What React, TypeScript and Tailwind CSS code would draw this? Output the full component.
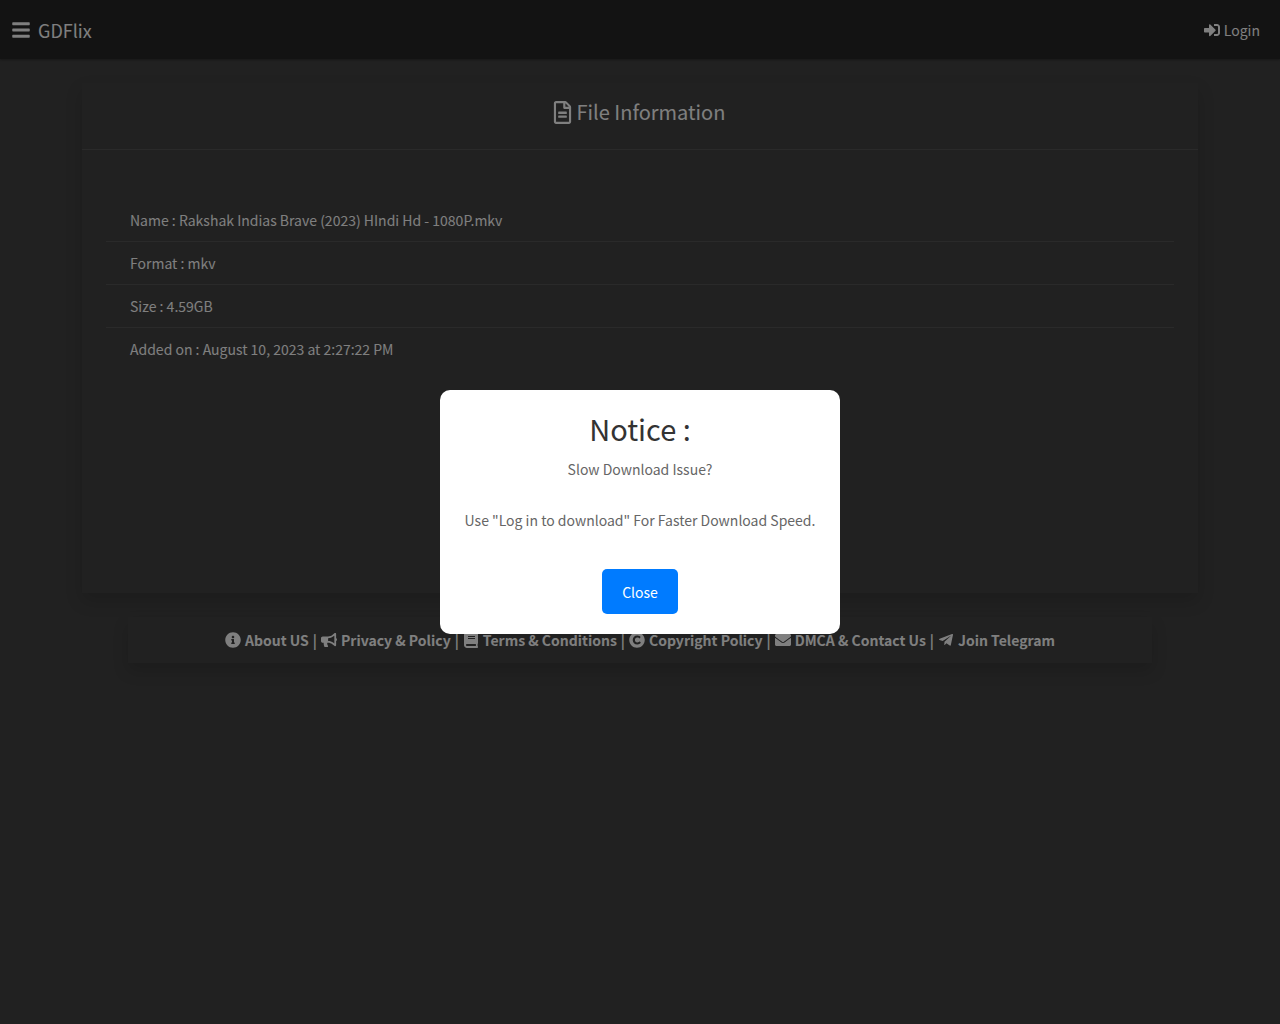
import { Fragment, useState } from "react";
import {
  FaBars,
  FaBook,
  FaBullhorn,
  FaCopyright,
  FaEnvelope,
  FaInfoCircle,
  FaRegFileAlt,
  FaSignInAlt,
  FaTelegramPlane,
} from "react-icons/fa";

const details = [
  "Name : Rakshak Indias Brave (2023) HIndi Hd - 1080P.mkv",
  "Format : mkv",
  "Size : 4.59GB",
  "Added on : August 10, 2023 at 2:27:22 PM",
];

const links = [
  { label: "About US", icon: FaInfoCircle },
  { label: "Privacy & Policy", icon: FaBullhorn },
  { label: "Terms & Conditions", icon: FaBook },
  { label: "Copyright Policy", icon: FaCopyright },
  { label: "DMCA & Contact Us", icon: FaEnvelope },
  { label: "Join Telegram", icon: FaTelegramPlane },
];

function Navbar() {
  return (
    <nav className="flex h-[59px] items-center justify-between bg-[#262626] pl-[11px] pr-5 shadow-[0_1px_2px_rgba(0,0,0,0.3)]">
      <div className="flex items-center gap-[7px]">
        <button type="button" aria-label="Menu">
          <FaBars className="h-5 w-auto" />
        </button>
        <a href="#" className="text-lg">
          GDFlix
        </a>
      </div>
      <a href="#" className="flex items-center gap-1">
        <FaSignInAlt className="h-4 w-auto" />
        Login
      </a>
    </nav>
  );
}

function FileCard() {
  return (
    <section className="min-h-[510px] shadow-[0_8px_16px_rgba(0,0,0,0.15)]">
      <h1 className="flex h-[67px] items-center justify-center gap-[3px] border-b border-white/10 pr-1 pb-2 text-xl">
        <FaRegFileAlt className="h-[23px] w-auto" />
        File Information
      </h1>
      <ul className="px-6 pt-[49px]">
        {details.map((item) => (
          <li key={item} className="border-b border-white/10 px-6 py-[9px] last:border-b-0">
            {item}
          </li>
        ))}
      </ul>
    </section>
  );
}

function Footer() {
  return (
    <footer className="mx-auto mt-6 flex w-4/5 flex-wrap justify-center gap-x-1 px-3 py-[11px] font-bold shadow-[0_8px_16px_rgba(0,0,0,0.15)]">
      {links.map(({ label, icon: Icon }, i) => (
        <Fragment key={label}>
          {i > 0 && <span>|</span>}
          <a href="#" className="flex items-center gap-1">
            <Icon className="h-4 w-auto" />
            {label}
          </a>
        </Fragment>
      ))}
    </footer>
  );
}

function Notice({ onClose }: { onClose: () => void }) {
  return (
    <div className="fixed inset-0 flex items-center justify-center bg-black/50">
      <div
        role="dialog"
        aria-labelledby="notice-title"
        className="w-full max-w-[400px] rounded-[10px] bg-white p-5 text-center text-[#666]"
      >
        <h2 id="notice-title" className="mb-[11px] text-[29px] leading-9 text-[#333]">
          Notice :
        </h2>
        <p>Slow Download Issue?</p>
        <p className="mt-[27px]">Use "Log in to download" For Faster Download Speed.</p>
        <button
          type="button"
          onClick={onClose}
          className="mt-[37px] h-[45px] rounded-[5px] bg-[#007bff] px-5 text-white"
        >
          Close
        </button>
      </div>
    </div>
  );
}

export default function App() {
  const [open, setOpen] = useState(true);

  return (
    <div className="min-h-screen bg-[#424242] font-['Noto_Sans_CJK_SC',sans-serif] text-sm leading-6 text-white">
      <Navbar />
      <main className="mx-auto max-w-[1140px] px-3 pt-6">
        <FileCard />
      </main>
      <Footer />
      {open && <Notice onClose={() => setOpen(false)} />}
    </div>
  );
}
